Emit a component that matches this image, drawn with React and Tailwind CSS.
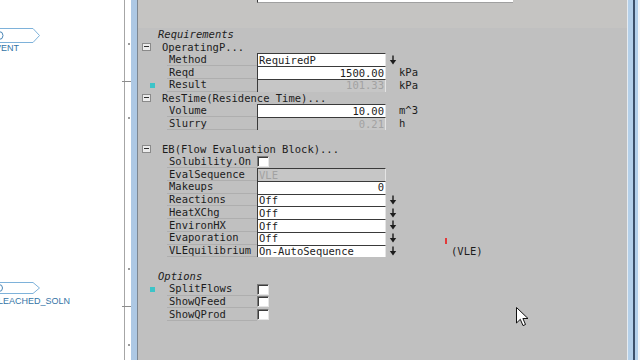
import React from 'react';

const mono = { fontFamily: '"DejaVu Sans Mono", "Liberation Mono", monospace' };

const rows = [
  { type: 'section', label: 'Requirements' },
  { type: 'group', label: 'OperatingP...' },
  { type: 'item', label: 'Method', field: { kind: 'edit', value: 'RequiredP' }, arrow: true },
  { type: 'item', label: 'Reqd', field: { kind: 'edit', value: '1500.00', right: true }, unit: 'kPa' },
  { type: 'item', label: 'Result', field: { kind: 'ro', value: '101.33', right: true }, unit: 'kPa', mark: true },
  { type: 'group', label: 'ResTime(Residence Time)...' },
  { type: 'item', label: 'Volume', field: { kind: 'edit', value: '10.00', right: true }, unit: 'm^3' },
  { type: 'item', label: 'Slurry', field: { kind: 'ro', value: '0.21', right: true }, unit: 'h' },
  { type: 'blank' },
  { type: 'group', label: 'EB(Flow Evaluation Block)...' },
  { type: 'item', label: 'Solubility.On', field: { kind: 'check' } },
  { type: 'item', label: 'EvalSequence', field: { kind: 'ro', value: 'VLE' } },
  { type: 'item', label: 'Makeups', field: { kind: 'edit', value: '0', right: true } },
  { type: 'item', label: 'Reactions', field: { kind: 'edit', value: 'Off' }, arrow: true },
  { type: 'item', label: 'HeatXChg', field: { kind: 'edit', value: 'Off' }, arrow: true },
  { type: 'item', label: 'EnvironHX', field: { kind: 'edit', value: 'Off' }, arrow: true },
  { type: 'item', label: 'Evaporation', field: { kind: 'edit', value: 'Off' }, arrow: true, caret: true },
  { type: 'item', label: 'VLEquilibrium', field: { kind: 'edit', value: 'On-AutoSequence' }, arrow: true, note: '(VLE)' },
  { type: 'blank' },
  { type: 'section', label: 'Options' },
  { type: 'item', label: 'SplitFlows', field: { kind: 'check' }, mark: true },
  { type: 'item', label: 'ShowQFeed', field: { kind: 'check' } },
  { type: 'item', label: 'ShowQProd', field: { kind: 'check' } },
];

const DownArrow = () => (
  <svg width="8" height="10" viewBox="0 0 8 10">
    <line x1="4" y1="0.5" x2="4" y2="6" stroke="#1c1c1c" strokeWidth="1.4" />
    <polygon points="0.8,5 7.2,5 4,9.6" fill="#1c1c1c" />
  </svg>
);

const Minus = () => (
  <div className="ml-[4px] w-[9px] h-[8px] bg-[#ececec] border border-[#8a8a8a] flex items-center justify-center">
    <div className="w-[5px] h-px bg-[#303030]" />
  </div>
);

const Field = ({ field }) => {
  if (field.kind === 'check') {
    return (
      <div className="w-[129px] h-full flex items-center">
        <div className="w-[12px] h-[11px] bg-white border-t border-l border-[#7a7a7a] border-r border-b border-r-[#e6e6e6] border-b-[#e6e6e6] shadow-[inset_1px_1px_0_#3c3c3c]" />
      </div>
    );
  }
  const ro = field.kind === 'ro';
  return (
    <div
      className={`w-[129px] h-full flex items-center border-t-[1.5px] border-l border-[#3a3a3a] border-r border-r-[#e4e4e4] ${
        ro ? 'bg-[#c6c6c6] text-[#a2a2a2]' : 'bg-white text-[#1c1c1c]'
      } ${field.right ? 'justify-end pr-[1px]' : 'pl-[1px]'}`}
    >
      {field.value}
    </div>
  );
};

const Row = ({ row }) => {
  if (row.type === 'blank') return <div className="h-[12.75px]" />;
  if (row.type === 'section') {
    return (
      <div className="h-[12.75px] flex items-center pl-[20px] italic text-[#1c1c1c] whitespace-nowrap">
        {row.label}
      </div>
    );
  }
  if (row.type === 'group') {
    return (
      <div className="h-[12.75px] flex items-center whitespace-nowrap">
        <div className="w-[24px] flex items-center">
          <Minus />
        </div>
        <span className="text-[#1c1c1c]">{row.label}</span>
      </div>
    );
  }
  return (
    <div className="h-[12.75px] flex items-stretch whitespace-nowrap">
      <div className="w-[24px] flex items-center">
        {row.mark && <div className="ml-[12px] w-[5px] h-[5px] bg-[#3cc4c8]" />}
      </div>
      <div className="w-[95px] flex">
        <div className="ml-[5px] w-[90px] pl-[2px] flex items-center border-b border-[#aeaeae] text-[#1c1c1c]">
          {row.label}
        </div>
      </div>
      <Field field={row.field} />
      <div className="w-[13px] flex items-center justify-center">{row.arrow && <DownArrow />}</div>
      <div className="w-[52px] flex items-center text-[#1c1c1c] relative">
        {row.unit}
        {row.caret && <div className="absolute left-[46px] bottom-[1px] w-[2px] h-[6px] bg-[#e23a3a]" />}
      </div>
      {row.note && <div className="flex items-center text-[#1c1c1c]">{row.note}</div>}
    </div>
  );
};

const Canvas = () => (
  <div className="relative w-[131px] h-full shrink-0 bg-white overflow-hidden">
    <div className="absolute left-[124px] top-0 w-px h-full bg-[#a6a6a6]" />
    <div className="absolute left-[122px] top-[81px] w-[9px] h-px bg-[#8c8c8c]" />
    <div className="absolute left-[122px] top-[306px] w-[9px] h-px bg-[#8c8c8c]" />
    {[43, 117, 268, 344].map(y => (
      <div key={y} className="absolute left-[128px] w-[2px] h-[2px] bg-[#9a9a9a]" style={{ top: y }} />
    ))}

    <svg className="absolute left-0 top-[28px]" width="42" height="16" viewBox="0 0 42 16">
      <path d="M-2 0.5 H33 L39.5 7.5 L33 14.5 H-2" fill="white" stroke="#7eb2da" strokeWidth="1" />
      <circle cx="-1" cy="7.5" r="4" fill="none" stroke="#4a86b6" strokeWidth="1" />
    </svg>
    <div className="absolute left-[-5px] top-[43px] text-[9px] leading-[10px] text-[#3474a6]" style={{ fontFamily: '"Liberation Sans", sans-serif' }}>
      VENT
    </div>

    <svg className="absolute left-0 top-[282px]" width="42" height="13" viewBox="0 0 42 13">
      <path d="M-2 0.5 H33 L39.5 6 L33 11.5 H-2" fill="white" stroke="#7eb2da" strokeWidth="1" />
      <circle cx="-1" cy="6" r="3.5" fill="none" stroke="#4a86b6" strokeWidth="1" />
    </svg>
    <div className="absolute left-[-2px] top-[296px] text-[9px] leading-[10px] text-[#3474a6]" style={{ fontFamily: '"Liberation Sans", sans-serif' }}>
      LEACHED_SOLN
    </div>
  </div>
);

export default function App() {
  return (
    <div className="w-[640px] h-[360px] flex overflow-hidden bg-white">
      <Canvas />
      <div className="w-[6px] h-full bg-[#adc8e4]" />
      <div className="w-px h-full bg-[#7d8690]" />

      <div className="relative flex-1 h-full bg-[#c0c0c0] text-[10.5px] leading-none" style={mono}>
        <div className="h-[27.75px] bg-[#c5c4c2]">
          <div className="ml-[119px] w-[256px] h-[3px] bg-white border-l border-b border-l-[#3a3a3a] border-b-[#a0a0a0]" />
        </div>
        {rows.map((row, i) => (
          <Row key={i} row={row} />
        ))}

        <svg className="absolute left-[378px] top-[307px]" width="13" height="20" viewBox="0 0 13 20">
          <path d="M0.5 0.5 L0.5 16 L4.3 12.3 L7 18.6 L9.5 17.5 L6.9 11.5 L12 11.5 Z" fill="white" stroke="#111" strokeWidth="1" strokeLinejoin="round" />
        </svg>
      </div>

      <div className="w-px h-full bg-[#e6ecf2]" />
      <div className="w-[5px] h-full bg-[#b4d0ea]" />
      <div className="w-[2px] h-full bg-[#3c506a]" />
      <div className="w-[3px] h-full bg-[#b4d0ea]" />
      <div className="w-[2px] h-full bg-[#f4f6f8]" />
    </div>
  );
}
